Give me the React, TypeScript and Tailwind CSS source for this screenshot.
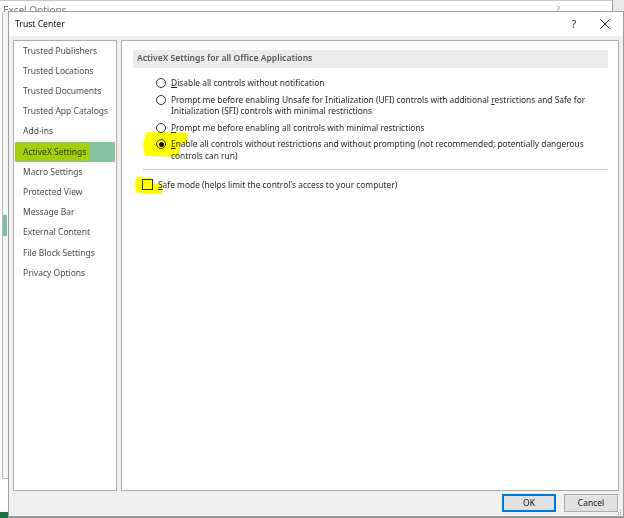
import React from "react";

const navItems = [
  "Trusted Publishers",
  "Trusted Locations",
  "Trusted Documents",
  "Trusted App Catalogs",
  "Add-ins",
  "ActiveX Settings",
  "Macro Settings",
  "Protected View",
  "Message Bar",
  "External Content",
  "File Block Settings",
  "Privacy Options",
];

function Radio({ checked }: { checked?: boolean }) {
  return (
    <span className="mt-[1px] flex h-[10px] w-[10px] shrink-0 items-center justify-center rounded-full border border-[#333] bg-white">
      {checked && <span className="h-[5px] w-[5px] rounded-full bg-[#111]" />}
    </span>
  );
}

export default function App() {
  return (
    <div className="relative h-[518px] w-[624px] overflow-hidden bg-[#e9e9e9] font-['Noto_Sans',sans-serif] text-[#222]">
      {/* Background Excel Options window */}
      <div className="absolute left-0 top-0 flex h-[513px] w-[613px] flex-col border-r border-[#9a9a9a] bg-white">
        <div className="flex h-[12px] items-start border-t border-[#c8c8c8] pl-[3px] pt-[3px]">
          <span className="text-[10px] leading-[12px] text-[#777]">Excel Options</span>
          <span className="ml-auto mr-[34px] text-[9px] leading-[12px] text-[#999]">?</span>
          <span className="mr-[10px] text-[9px] leading-[12px] text-[#999]">⌄</span>
        </div>
        <div className="flex flex-1 flex-col pl-[2px]">
          <div className="flex h-[467px] w-[6px] flex-col border-l border-b border-[#b5b5b5] bg-[#f6f6f6] pt-[203px]">
            <div className="h-[21px] w-[4px] bg-[#7fbf9f]" />
          </div>
        </div>
      </div>
      <div className="absolute bottom-0 left-0 h-[1px] w-[624px] bg-[#8a8a8a]" />
      <div className="absolute bottom-0 left-0 h-[6px] w-[8px] bg-[#217346]" />

      {/* Trust Center dialog */}
      <div className="absolute left-[8px] top-[11px] flex h-[506px] w-[616px] flex-col border border-[#9f9f9f] bg-[#f0f0f0]">
        <div className="flex h-[24px] items-center bg-white pl-[6px]">
          <span className="text-[8.6px] text-black">Trust Center</span>
          <span className="ml-auto mr-[24px] text-[10px] text-[#222]">?</span>
          <svg width="10" height="10" viewBox="0 0 10 10" className="mr-[13px]">
            <path d="M0.5 0.5 L9.5 9.5 M9.5 0.5 L0.5 9.5" stroke="#222" strokeWidth="1" fill="none" />
          </svg>
        </div>
        <div className="relative flex flex-1 flex-col px-[4px] pt-[4px]">
          <div className="flex h-[451px] gap-[4px]">
            {/* Left nav */}
            <div className="flex w-[104px] flex-col border border-[#adadad] bg-white">
              {navItems.map((item) => {
                const sel = item === "ActiveX Settings";
                return (
                  <div
                    key={item}
                    className={`relative mx-[1px] flex h-[20.2px] items-center pl-[8px] text-[8.5px] ${
                      sel ? "bg-[#86c3a0] text-[#2a3a10]" : "text-[#4a4a4a]"
                    }`}
                  >
                    {sel && (
                      <span className="absolute left-0 top-[1px] h-[18px] w-[75px] rounded-[3px] bg-[#a4cf0c]" />
                    )}
                    <span className="relative">{item}</span>
                  </div>
                );
              })}
            </div>

            {/* Right panel */}
            <div className="relative flex flex-1 flex-col border border-[#adadad] bg-white text-[8.4px] leading-[11.5px] text-[#262626]">
              <div className="ml-[11px] mr-[10px] mt-[9px] flex h-[18px] items-center bg-[#ebebeb] pl-[4px] text-[8.6px] font-semibold text-[#555]">
                ActiveX Settings for all Office Applications
              </div>
              <div className="ml-[34px] mt-[9px] flex flex-col gap-[5px]">
                <div className="flex items-start gap-[5px]">
                  <Radio />
                  <span>
                    <u>D</u>isable all controls without notification
                  </span>
                </div>
                <div className="flex items-start gap-[5px]">
                  <Radio />
                  <span className="whitespace-nowrap">
                    Prompt me before enabling Unsafe for Initialization (UFI) controls with additional <u>r</u>estrictions and Safe for
                    <br />
                    Initialization (SFI) controls with minimal restrictions
                  </span>
                </div>
                <div className="flex items-start gap-[5px]">
                  <Radio />
                  <span>
                    <u>P</u>rompt me before enabling all controls with minimal restrictions
                  </span>
                </div>
                <div className="flex items-start gap-[5px]">
                  <Radio checked />
                  <span className="whitespace-nowrap">
                    <u>E</u>nable all controls without restrictions and without prompting (not recommended; potentially dangerous
                    <br />
                    controls can run)
                  </span>
                </div>
              </div>
              <div className="ml-[21px] mr-[10px] mt-[8px] h-px bg-[#c4c4c4]" />
              <div className="ml-[20px] mt-[9px] flex items-start gap-[5px]">
                <span className="mt-[0.25px] h-[11px] w-[11px] shrink-0 border border-[#333] bg-white" />
                <span>
                  <u>S</u>afe mode (helps limit the control's access to your computer)
                </span>
              </div>

              {/* highlighter marks */}
              <svg className="absolute left-[21px] top-[91px] mix-blend-multiply" width="45" height="25" viewBox="0 0 45 25">
                <polygon points="4,0 45,1 44,12 37,13 36,25 2,24 0,12 2,5" fill="#ffff00" />
              </svg>
              <svg className="absolute left-[13px] top-[136px] mix-blend-multiply" width="28" height="17" viewBox="0 0 28 17">
                <polygon points="2,0 16,1 17,7 28,7 27,17 14,17 1,16 0,6" fill="#ffff00" />
              </svg>
            </div>
          </div>
          <div className="mt-[3px] flex justify-end gap-[8px] pr-[1px]">
            <button className="flex h-[18px] w-[54px] items-center justify-center border-2 border-[#0078d7] bg-[#e1e1e1] text-[8.5px] text-[#111]">
              OK
            </button>
            <button className="flex h-[18px] w-[54px] items-center justify-center border border-[#adadad] bg-[#e1e1e1] text-[8.5px] text-[#111]">
              Cancel
            </button>
          </div>
          <svg className="absolute bottom-[1px] right-[1px]" width="5" height="5" viewBox="0 0 5 5">
            <rect x="3" y="0" width="1" height="1" fill="#999" />
            <rect x="1" y="2" width="1" height="1" fill="#999" />
            <rect x="3" y="2" width="1" height="1" fill="#999" />
            <rect x="3" y="4" width="1" height="1" fill="#999" />
            <rect x="1" y="4" width="1" height="1" fill="#999" />
          </svg>
        </div>
      </div>
    </div>
  );
}
